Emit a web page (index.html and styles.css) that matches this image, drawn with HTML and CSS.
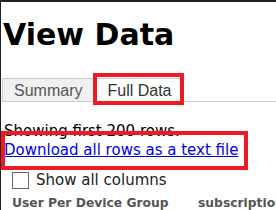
FILE: index.html
```html
<!DOCTYPE html>
<html lang="en">
<head>
  <meta charset="UTF-8" />
  <title>View Data</title>
  <link rel="stylesheet" href="styles.css">
</head>
<body>
  <div class="page">
    <h1 class="title">View Data</h1>

    <div class="tabs">
      <div class="tab">Summary</div>
      <div class="tab tab--active">Full Data</div>
    </div>

    <p class="status">Showing first 200 rows.</p>
    <a class="download" href="#">Download all rows as a text file</a>

    <label class="option">
      <span class="option__box"></span>
      <span>Show all columns</span>
    </label>

    <div class="table-head">
      <div class="table-head__cell">User Per Device Group</div>
      <div class="table-head__cell">subscription</div>
    </div>

    <div class="mark mark--tab"></div>
    <div class="mark mark--link"></div>
  </div>
</body>
</html>
```

FILE: styles.css
```css
html, body {
  margin: 0;
  padding: 0;
  background: white;
  overflow: hidden;
}

body {
  border-top: 2px solid #222;
  border-left: 1px solid #222;
  height: 208px;
}

.page {
  position: relative;
  padding: 15px 0 0 1px;
  font-family: "DejaVu Sans", Verdana, sans-serif;
  color: #111;
}

.title {
  margin: 0 0 0 1px;
  font-size: 30px;
  line-height: 36px;
  font-weight: bold;
  color: #000;
}

.tabs {
  display: flex;
  margin-top: 25px;
  border-bottom: 1px solid #ccc;
  font-family: "Liberation Sans", Arial, sans-serif;
  font-size: 16px;
}

.tab {
  padding: 2px 11px 0;
  line-height: 20px;
  border: 1px solid #ccc;
  margin-bottom: -1px;
  background: #f0f0f0;
  color: #555;
}

.tab--active {
  background: white;
  color: #333;
  border-bottom-color: white;
  padding: 2px 12px 0;
}

.status {
  margin: 20px 0 0 2px;
  font-size: 15px;
  line-height: 19px;
  color: #000;
}

.download {
  display: block;
  margin-left: 2px;
  font-size: 15px;
  line-height: 19px;
  color: #0000ee;
}

.option {
  display: flex;
  align-items: center;
  gap: 7px;
  margin: 11px 0 0 10px;
  font-size: 15px;
  line-height: 19px;
  color: #222;
}

.option__box {
  width: 15px;
  height: 15px;
  border: 1px solid #666;
  background: white;
}

.table-head {
  display: flex;
  margin-top: 5px;
  padding-left: 10px;
  font-size: 12.3px;
  line-height: 16px;
  font-weight: bold;
  color: #555;
  white-space: nowrap;
  overflow: hidden;
}

.table-head__cell {
  width: 186px;
  flex-shrink: 0;
}

.mark {
  position: absolute;
  border: 4px solid #ed1c24;
  box-sizing: border-box;
}

.mark--tab {
  left: 92px;
  top: 71px;
  width: 91px;
  height: 32px;
}

.mark--link {
  left: 0;
  top: 129px;
  width: 247px;
  height: 39px;
}
```
